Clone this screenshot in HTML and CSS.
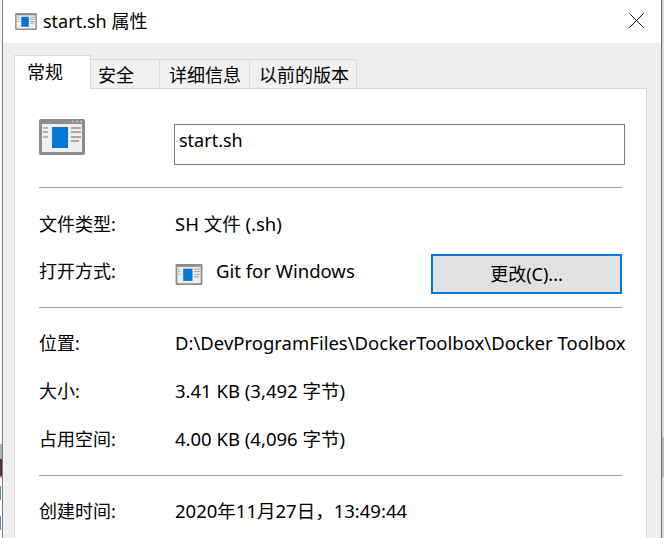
FILE: index.html
```html
<!DOCTYPE html>
<html lang="zh-CN">
<head>
<meta charset="utf-8">
<title>start.sh 属性</title>
<link rel="stylesheet" href="styles.css">
</head>
<body>
<div class="window">
  <header class="titlebar">
    <svg class="icon-title" viewBox="0 0 46 36"><use href="#fileicon"/></svg>
    <span class="title">start.sh 属性</span>
    <svg class="close" viewBox="0 0 16 16"><path d="M.5.5l15 15M15.500.5l-15 15" stroke="#000" fill="none"/></svg>
  </header>
  <div class="body">
    <nav class="tabs">
      <div class="tab active">常规</div>
      <div class="tab t2">安全</div>
      <div class="tab t3">详细信息</div>
      <div class="tab t4">以前的版本</div>
    </nav>
    <main class="panel">
      <div class="head">
        <svg class="icon-big" viewBox="0 0 46 36">
          <defs>
            <g id="fileicon">
              <rect x="0" y="0" width="46" height="36" rx="2" fill="#8c8c8c"/>
              <rect x="3" y="5" width="40" height="28" fill="#efefef"/>
              <rect x="13" y="8" width="16" height="21" fill="#0078d7"/>
              <path d="M32 9h10M32 13h10M32 18h10M32 22h8" stroke="#a8a8a8" stroke-width="2"/>
              <path d="M4 9h5M4 13h5M4 18h5" stroke="#b5b5b5" stroke-width="2"/>
              <path d="M33 2.500h2M37 2.500h2M41 2.500h2" stroke="#b8b8b8" stroke-width="2"/>
            </g>
          </defs>
          <use href="#fileicon"/>
        </svg>
        <div class="namebox">start.sh</div>
      </div>
      <hr class="sep">
      <div class="row r-type"><span class="label">文件类型:</span><span class="value">SH 文件 (.sh)</span></div>
      <div class="row r-open">
        <span class="label">打开方式:</span>
        <span class="value app">
          <svg class="icon-small" viewBox="0 0 46 36"><use href="#fileicon"/></svg>
          <span>Git for Windows</span>
        </span>
        <button class="btn">更改(C)...</button>
      </div>
      <hr class="sep">
      <div class="group">
        <div class="row"><span class="label">位置:</span><span class="value">D:\DevProgramFiles\DockerToolbox\Docker Toolbox</span></div>
        <div class="row"><span class="label">大小:</span><span class="value">3.41 KB (3,492 字节)</span></div>
        <div class="row"><span class="label">占用空间:</span><span class="value">4.00 KB (4,096 字节)</span></div>
      </div>
      <hr class="sep">
      <div class="group">
        <div class="row"><span class="label">创建时间:</span><span class="value">2020年11月27日，13:49:44</span></div>
      </div>
    </main>
  </div>
</div>
</body>
</html>
```
FILE: styles.css
```css
* { box-sizing: border-box; }
html, body { margin: 0; height: 100%; }
body {
  width: 664px; height: 538px; overflow: hidden;
  background:
    linear-gradient(#b8b8b8, #b8b8b8) 662px 437px / 2px 40px no-repeat,
    linear-gradient(#5a2a3a, #5a2a3a) 0 459px / 2px 17px no-repeat,
    linear-gradient(#b0b0b0, #b0b0b0) 0 444px / 2px 34px no-repeat,
    linear-gradient(#4a90d0, #4a90d0) 0 486px / 1px 14px no-repeat,
    linear-gradient(#4a90d0, #4a90d0) 0 516px / 1px 14px no-repeat,
    linear-gradient(to right, #f8f8f8 0 332px, #dcdcdc 332px);
  font-family: "Noto Sans", "Noto Sans CJK SC", sans-serif;
  font-size: 18px; color: #000;
  padding-left: 2px; padding-right: 2px;
}
.window {
  height: 538px; display: flex; flex-direction: column;
  background: #eeeeee;
  border-left: 1px solid #808080; border-right: 1px solid #6a6a6a;
}
.titlebar {
  height: 43px; flex: none; background: #fff;
  display: flex; align-items: center;
  padding: 0 17px 0 12px;
}
.icon-title { width: 22px; height: 17px; margin-right: 6px; }
.title { flex: 1; line-height: 24px; margin-bottom: 2px; }
.close { width: 15px; height: 15px; margin-bottom: 2px; }
.body { flex: 1; padding: 12px 14px 0 11px; min-height: 0; }
.tabs { display: flex; align-items: flex-end; height: 33px; position: relative; z-index: 1; }
.tab {
  height: 29px; background: #f0f0f0;
  border: 1px solid #d9d9d9; border-left: 0; border-bottom: 0;
  display: flex; align-items: center;
  line-height: 24px; padding-left: 9px; padding-top: 2px;
}
.tab.active {
  width: 77px; height: 34px; margin-bottom: -1px; background: #fff;
  border-left: 1px solid #d9d9d9; padding: 0 0 2px 12px;
}
.t2 { width: 69px; padding-left: 7px; } .t3 { width: 90px; } .t4 { width: 107px; }
.panel {
  height: 450px; background: #fff; overflow: hidden;
  border: 1px solid #d9d9d9; border-bottom: 0;
  padding: 0 24px;
}
.head { display: flex; align-items: flex-start; height: 98px; }
.icon-big { width: 46px; height: 36px; margin-top: 30px; margin-right: 89px; flex: none; }
.namebox {
  width: 451px; height: 41px; margin-top: 35px; flex: none;
  border: 1px solid #7a7a7a; padding: 3px 4px; line-height: 24px;
}
.sep { height: 1px; border: 0; margin: 0; background: #a0a0a0; width: 583px; }
.row { display: flex; align-items: center; white-space: nowrap; line-height: 24px; height: 24px; }
.label { width: 136px; flex: none; }
.value { flex: none; font-size: 18.5px; }
.r-type { height: 66px; padding-top: 6px; }
.r-open { height: 53px; align-items: flex-start; }
.r-open .label { margin-top: 5px; }
.app { display: flex; align-items: flex-start; width: 256px; margin-top: 5px; }
.icon-small { width: 28px; height: 21px; margin: 5px 13px 0 0; flex: none; }
.btn {
  width: 191px; height: 40px; flex: none;
  background: #e1e1e1; border: 2px solid #0078d7; padding: 0;
  font: inherit; color: inherit;
}
.group { display: flex; flex-direction: column; gap: 24px; padding: 23px 0 24px; }
```
